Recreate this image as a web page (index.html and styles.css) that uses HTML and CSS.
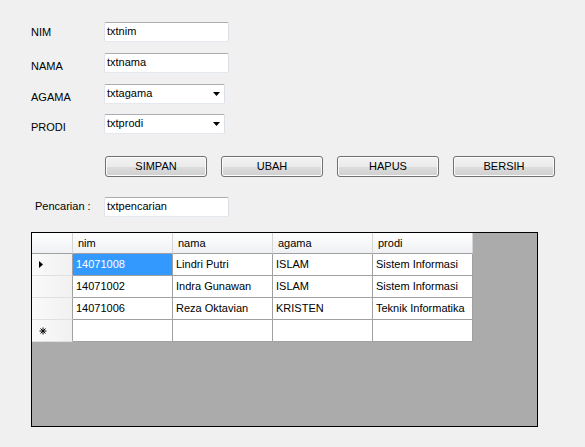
FILE: index.html
```html
<!DOCTYPE html>
<html>
<head>
<meta charset="utf-8">
<link rel="stylesheet" href="styles.css">
</head>
<body>
<div class="window">
  <div class="fields">
    <div class="field">
      <span class="label label-first">NIM</span>
      <div class="textbox">txtnim</div>
    </div>
    <div class="field">
      <span class="label">NAMA</span>
      <div class="textbox">txtnama</div>
    </div>
    <div class="field">
      <span class="label">AGAMA</span>
      <div class="combo"><span>txtagama</span><svg class="arrow" width="7" height="4" viewBox="0 0 7 4"><polygon points="0,0 7,0 3.5,4" fill="#000"/></svg></div>
    </div>
    <div class="field field-last">
      <span class="label">PRODI</span>
      <div class="combo"><span>txtprodi</span><svg class="arrow" width="7" height="4" viewBox="0 0 7 4"><polygon points="0,0 7,0 3.5,4" fill="#000"/></svg></div>
    </div>
  </div>

  <div class="buttons">
    <div class="btn">SIMPAN</div>
    <div class="btn">UBAH</div>
    <div class="btn">HAPUS</div>
    <div class="btn">BERSIH</div>
  </div>

  <div class="search">
    <span class="search-label">Pencarian :</span>
    <div class="textbox">txtpencarian</div>
  </div>

  <div class="grid">
    <div class="table">
      <div class="corner"></div>
      <div class="colhead">nim</div>
      <div class="colhead">nama</div>
      <div class="colhead">agama</div>
      <div class="colhead">prodi</div>

      <div class="rowhead"><svg width="4" height="7" viewBox="0 0 4 7"><polygon points="0,0 4,3.5 0,7" fill="#000"/></svg></div>
      <div class="cell selected">14071008</div>
      <div class="cell">Lindri Putri</div>
      <div class="cell">ISLAM</div>
      <div class="cell">Sistem Informasi</div>

      <div class="rowhead"></div>
      <div class="cell">14071002</div>
      <div class="cell">Indra Gunawan</div>
      <div class="cell">ISLAM</div>
      <div class="cell">Sistem Informasi</div>

      <div class="rowhead"></div>
      <div class="cell">14071006</div>
      <div class="cell">Reza Oktavian</div>
      <div class="cell">KRISTEN</div>
      <div class="cell">Teknik Informatika</div>

      <div class="rowhead"><svg class="star" width="8" height="8" viewBox="0 0 8 8"><path d="M4 0.5V7.5M0.5 4H7.5M1.5 1.5L6.5 6.5M6.5 1.5L1.5 6.5" stroke="#000" stroke-width="1" fill="none"/></svg></div>
      <div class="cell"></div>
      <div class="cell"></div>
      <div class="cell"></div>
      <div class="cell"></div>
    </div>
  </div>
</div>
</body>
</html>
```

FILE: styles.css
```css
html, body {
  margin: 0;
  padding: 0;
}
body {
  background: #f0f0f0;
  font-family: "Liberation Sans", Arial, sans-serif;
  font-size: 11px;
  color: #000;
}
.window {
  width: 585px;
  height: 447px;
  box-sizing: border-box;
  padding: 22px 0 0 31px;
  background: #f0f0f0;
}
.fields {
  display: flex;
  flex-direction: column;
  gap: 11px;
}
.field {
  display: flex;
  align-items: flex-start;
  height: 20px;
}
.field-last {
  margin-top: -1px;
}
.label {
  width: 73px;
  padding-top: 7px;
  line-height: 13px;
}
.label-first {
  padding-top: 4px;
}
.textbox, .combo {
  box-sizing: border-box;
  height: 20px;
  width: 125px;
  background: #fff;
  border: 1px solid;
  border-color: #abadb3 #dbdfe6 #e3e9ef #e2e3ea;
  border-radius: 2px;
  padding: 0 0 0 2px;
  line-height: 17px;
}
.combo {
  width: 121px;
  display: flex;
  align-items: center;
  justify-content: space-between;
  padding-right: 4px;
  line-height: normal;
}
.combo span {
  margin-top: -2px;
}
.arrow {
  display: block;
}
.buttons {
  display: flex;
  gap: 14px;
  margin-top: 22px;
  padding-left: 74px;
}
.btn {
  box-sizing: border-box;
  width: 102px;
  height: 21px;
  border: 1px solid #707070;
  border-radius: 3px;
  background: linear-gradient(#f2f2f2 0%, #ebebeb 50%, #dddddd 51%, #cfcfcf 100%);
  box-shadow: inset 0 0 0 1px #fcfcfc;
  text-align: center;
  line-height: 19px;
}
.search {
  display: flex;
  align-items: flex-start;
  margin-top: 20px;
  padding-left: 4px;
}
.search-label {
  width: 69px;
  padding-top: 3px;
  line-height: 13px;
}
.grid {
  box-sizing: border-box;
  width: 507px;
  height: 195px;
  margin-top: 15px;
  border: 1px solid #000;
  background: #ababab;
}
.table {
  display: grid;
  grid-template-columns: 41px repeat(4, 100px);
  grid-template-rows: 21px repeat(4, 22px);
  width: 441px;
}
.table > div {
  box-sizing: border-box;
  border-right: 1px solid #a0a0a0;
  border-bottom: 1px solid #a0a0a0;
  white-space: nowrap;
  overflow: hidden;
}
.corner, .colhead {
  background: linear-gradient(#ffffff 0%, #f7f8fa 50%, #eef0f3 100%);
}
.table > .corner, .table > .colhead {
  border-right-color: #d5d5d5;
  border-bottom-color: #a0a0a0;
}
.colhead {
  padding-left: 5px;
  line-height: 20px;
}
.table > .rowhead {
  background: linear-gradient(90deg, #fafafa, #f1f1f1);
  border-bottom-color: #e0e0e0;
  display: flex;
  align-items: center;
  padding-left: 7px;
}
.cell {
  background: #fff;
  padding-left: 3px;
  line-height: 21px;
}
.selected {
  background: #3399ff;
  color: #fff;
}
```
